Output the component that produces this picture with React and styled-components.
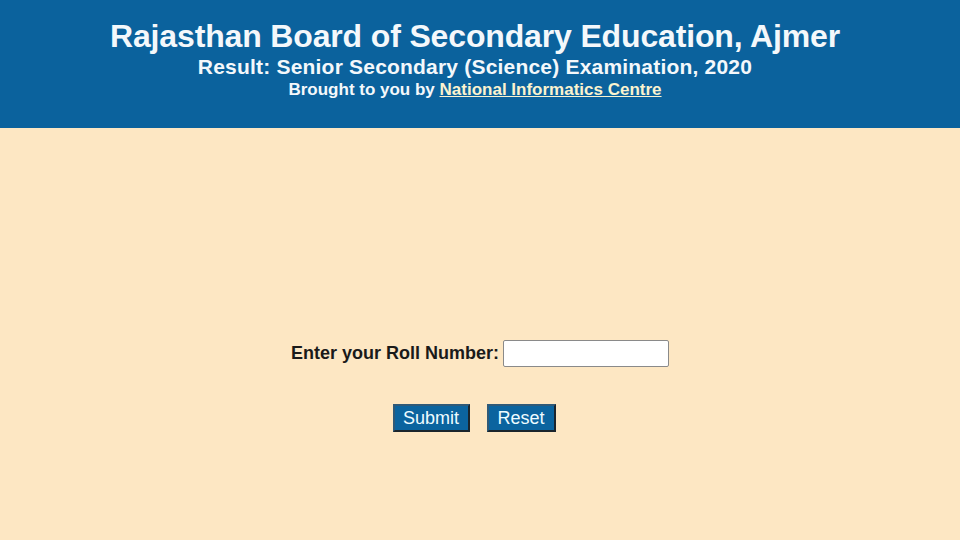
import React from "react";
import styled, { createGlobalStyle } from "styled-components";

const Global = createGlobalStyle`
  html, body { margin: 0; padding: 0; background: #fde7c3; }
  body { font-family: "Liberation Sans", Arial, sans-serif; }
`;

const Page = styled.div`
  width: 960px;
  height: 540px;
  background: #fde7c3;
  display: flex;
  flex-direction: column;
`;

const Header = styled.header`
  height: 128px;
  background: #0b629d;
  color: #f4f8fb;
  display: flex;
  flex-direction: column;
  align-items: center;
  padding: 17px 10px 0 0;
  box-sizing: border-box;
`;

const Title = styled.h1`
  margin: 0;
  font-size: 32px;
  font-weight: bold;
  line-height: 38px;
  letter-spacing: -0.15px;
  white-space: nowrap;
`;

const Subtitle = styled.h2`
  margin: 0;
  font-size: 21px;
  font-weight: bold;
  line-height: 24px;
  letter-spacing: 0.2px;
  white-space: nowrap;
`;

const Credit = styled.div`
  margin-top: 1px;
  font-size: 17px;
  font-weight: bold;
  line-height: 20px;
  white-space: nowrap;
`;

const Link = styled.a`
  color: #fbf3cf;
  text-decoration: underline;
`;

const Main = styled.main`
  flex: 1;
  display: flex;
  flex-direction: column;
  align-items: center;
  padding-top: 212px;
`;

const Row = styled.div`
  display: flex;
  align-items: center;
  gap: 4px;
`;

const Label = styled.label`
  font-size: 18px;
  font-weight: bold;
  color: #1a1a1a;
`;

const Input = styled.input`
  width: 166px;
  height: 27px;
  box-sizing: border-box;
  border: 1px solid #8a8a8a;
  border-radius: 2px;
  background: #fff;
  font-size: 14px;
  padding: 2px 4px;
`;

const Buttons = styled.div`
  display: flex;
  gap: 17px;
  margin-top: 37px;
  padding-right: 12px;
`;

const Button = styled.button`
  height: 28px;
  width: ${(p) => p.$w}px;
  background: #0b649f;
  color: #eefcff;
  font-family: "Liberation Sans", Arial, sans-serif;
  font-size: 18px;
  border: 2px solid;
  border-color: #2f5a78 #1b252c #1b252c #2f5a78;
  padding: 0;
  cursor: pointer;
`;

export default function App() {
  return (
    <>
      <Global />
      <Page>
        <Header>
          <Title>Rajasthan Board of Secondary Education, Ajmer</Title>
          <Subtitle>Result: Senior Secondary (Science) Examination, 2020</Subtitle>
          <Credit>
            Brought to you by <Link href="#">National Informatics Centre</Link>
          </Credit>
        </Header>
        <Main>
          <Row>
            <Label htmlFor="roll">Enter your Roll Number:</Label>
            <Input id="roll" type="text" />
          </Row>
          <Buttons>
            <Button $w={77}>Submit</Button>
            <Button $w={69}>Reset</Button>
          </Buttons>
        </Main>
      </Page>
    </>
  );
}
